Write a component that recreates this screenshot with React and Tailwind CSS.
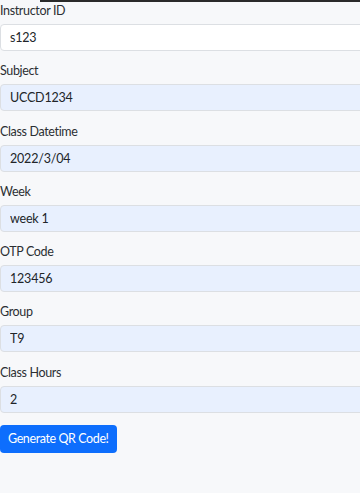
import React from "react";

const fields = [
  { label: "Instructor ID", value: "s123", autofill: false },
  { label: "Subject", value: "UCCD1234", autofill: true },
  { label: "Class Datetime", value: "2022/3/04", autofill: true },
  { label: "Week", value: "week 1", autofill: true },
  { label: "OTP Code", value: "123456", autofill: true },
  { label: "Group", value: "T9", autofill: true },
  { label: "Class Hours", value: "2", autofill: true },
];

const App = () => {
  return (
    <div
      className="relative w-[360px] h-[493px] overflow-hidden bg-[#f7f8fa] text-[#212529]"
      style={{ fontFamily: "Lato, 'Open Sans', sans-serif" }}
    >
      <div className="absolute top-0 left-[40px] right-0 h-[2px] bg-[#2a2a2a]" />
      <form className="pt-px">
        {fields.map((f) => (
          <div key={f.label} className="mb-[10.3px]">
            <label className="block h-5 leading-5 text-[12.5px] tracking-[-0.35px] mb-[3px] text-[#2b2f33]">
              {f.label}
            </label>
            <input
              readOnly
              value={f.value}
              className={
                "block w-[372px] h-[27px] px-[9px] text-[12.5px] tracking-[-0.2px] rounded border border-[#dcdfe3] outline-none text-[#212529] " +
                (f.autofill ? "bg-[#e8f0fe]" : "bg-white")
              }
            />
          </div>
        ))}
        <button
          type="button"
          className="mt-[2px] h-[28px] px-2 rounded bg-[#0d6efd] text-white text-[12.5px] tracking-[-0.4px]"
        >
          Generate QR Code!
        </button>
      </form>
    </div>
  );
};

export default App;
